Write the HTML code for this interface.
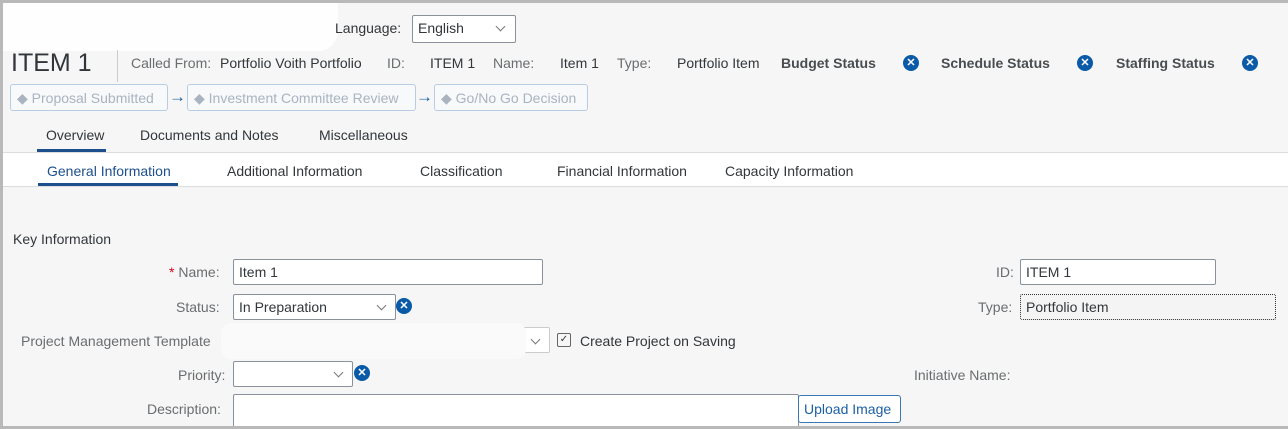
<!DOCTYPE html>
<html><head><meta charset="utf-8"><style>
*{margin:0;padding:0;box-sizing:border-box}
body{width:1288px;height:429px;overflow:hidden;background:#b9b9b9;font-family:"Liberation Sans",sans-serif;font-size:14px;color:#32363a;position:relative}
#pg{position:absolute;left:3px;top:3px;width:1285px;height:423px;background:#f6f6f6;overflow:hidden}
.a{position:absolute;white-space:nowrap}
.lbl{color:#6a6d70}
.inp{position:absolute;background:#fff;border:1px solid #89919a;border-radius:2px;height:26px;padding:4px 5px;font-size:14px}
.x{position:absolute;width:16px;height:16px;border-radius:50%;background:#0a5aa8;color:#fff;font-size:11px;font-weight:bold;line-height:16px;text-align:center}
.chev{position:absolute;width:7px;height:7px;border-right:1px solid #777;border-bottom:1px solid #777;transform:rotate(45deg)}
.step{position:absolute;top:81px;height:27px;border:1px solid #b8cde3;border-radius:3px;color:#a9b4c0;padding:5px 0 0 6px;font-size:14px;background:#f8f9fb;overflow:hidden}
.arr{position:absolute;top:84px;color:#1c5fa3;font-size:17px;font-weight:bold}
.b{font-weight:bold;color:#4a4d50}
</style></head><body><div id="pg">
<div class="a" style="left:0;top:0;width:335px;height:48px;background:#fff;border-radius:0 0 20px 0;opacity:.9"></div>
<div class="a" style="left:332px;top:17px;color:#32363a">Language:</div>
<div class="inp" style="left:409px;top:12px;width:104px;height:28px">English</div>
<div class="chev" style="left:494px;top:20px"></div>
<div class="a" style="left:8px;top:46px;font-size:25px;color:#32363a">ITEM 1</div>
<div class="a" style="left:114px;top:47px;width:1px;height:32px;background:#ccc"></div>
<div class="a lbl" style="left:128px;top:52px">Called From:</div>
<div class="a" style="left:217px;top:52px">Portfolio Voith Portfolio</div>
<div class="a lbl" style="left:384px;top:52px">ID:</div>
<div class="a" style="left:427px;top:52px">ITEM 1</div>
<div class="a lbl" style="left:490px;top:52px">Name:</div>
<div class="a" style="left:557px;top:52px">Item 1</div>
<div class="a lbl" style="left:614px;top:52px">Type:</div>
<div class="a" style="left:674px;top:52px">Portfolio Item</div>
<div class="a b" style="left:778px;top:52px">Budget Status</div>
<div class="x" style="left:900px;top:52px">✕</div>
<div class="a b" style="left:938px;top:52px">Schedule Status</div>
<div class="x" style="left:1074px;top:52px">✕</div>
<div class="a b" style="left:1113px;top:52px">Staffing Status</div>
<div class="x" style="left:1239px;top:52px">✕</div>
<div class="step" style="left:7px;width:158px">◆ Proposal Submitted</div>
<div class="arr" style="left:166px">→</div>
<div class="step" style="left:184px;width:229px">◆ Investment Committee Review</div>
<div class="arr" style="left:413px">→</div>
<div class="step" style="left:431px;width:154px">◆ Go/No Go Decision</div>
<div class="a" style="left:43px;top:124px">Overview</div>
<div class="a" style="left:34px;top:146px;width:69px;height:3px;background:#1c4f8c"></div>
<div class="a" style="left:137px;top:124px">Documents and Notes</div>
<div class="a" style="left:316px;top:124px">Miscellaneous</div>
<div class="a" style="left:0;top:149px;width:1285px;height:35px;background:#fff;border-top:1px solid #ddd;border-bottom:1px solid #ddd"></div>
<div class="a" style="left:44px;top:160px;color:#1c4f8c">General Information</div>
<div class="a" style="left:35px;top:180px;width:140px;height:3px;background:#1c4f8c"></div>
<div class="a" style="left:224px;top:160px">Additional Information</div>
<div class="a" style="left:417px;top:160px">Classification</div>
<div class="a" style="left:554px;top:160px">Financial Information</div>
<div class="a" style="left:722px;top:160px">Capacity Information</div>
<div class="a" style="left:10px;top:228px">Key Information</div>
<div class="a lbl" style="left:166px;top:261px"><span style="color:#d0021b">*</span> Name:</div>
<div class="inp" style="left:230px;top:256px;width:310px">Item 1</div>
<div class="a lbl" style="left:993px;top:261px">ID:</div>
<div class="inp" style="left:1017px;top:256px;width:196px">ITEM 1</div>
<div class="a lbl" style="left:173px;top:296px">Status:</div>
<div class="inp" style="left:230px;top:291px;width:163px">In Preparation</div>
<div class="chev" style="left:375px;top:299px"></div>
<div class="x" style="left:393px;top:295px">✕</div>
<div class="a lbl" style="left:975px;top:296px">Type:</div>
<div class="inp" style="left:1017px;top:291px;width:256px;background:#f4f4f4;border:1px dotted #333">Portfolio Item</div>
<div class="a lbl" style="left:18px;top:330px">Project Management Template</div>
<div class="inp" style="left:222px;top:324px;width:325px;border-color:#ccc"></div>
<div class="a" style="left:218px;top:320px;width:305px;height:36px;background:#fafafa;border-radius:10px"></div>
<div class="chev" style="left:529px;top:333px"></div>
<div class="a" style="left:554px;top:330px;width:14px;height:14px;border:1px solid #666;border-radius:2px;font-size:10px;line-height:12px;text-align:center">✓</div>
<div class="a" style="left:577px;top:330px">Create Project on Saving</div>
<div class="a lbl" style="left:175px;top:364px">Priority:</div>
<div class="inp" style="left:230px;top:358px;width:120px"></div>
<div class="chev" style="left:332px;top:366px"></div>
<div class="x" style="left:351px;top:362px">✕</div>
<div class="a lbl" style="left:911px;top:364px">Initiative Name:</div>
<div class="a lbl" style="left:144px;top:398px">Description:</div>
<div class="inp" style="left:230px;top:391px;width:566px;height:40px"></div>
<div class="a" style="left:795px;top:392px;width:103px;height:28px;border:1px solid #3a78b5;border-radius:3px;color:#1c5fa3;background:#fff;padding:5px 5px">Upload Image</div>
</div></body></html>
